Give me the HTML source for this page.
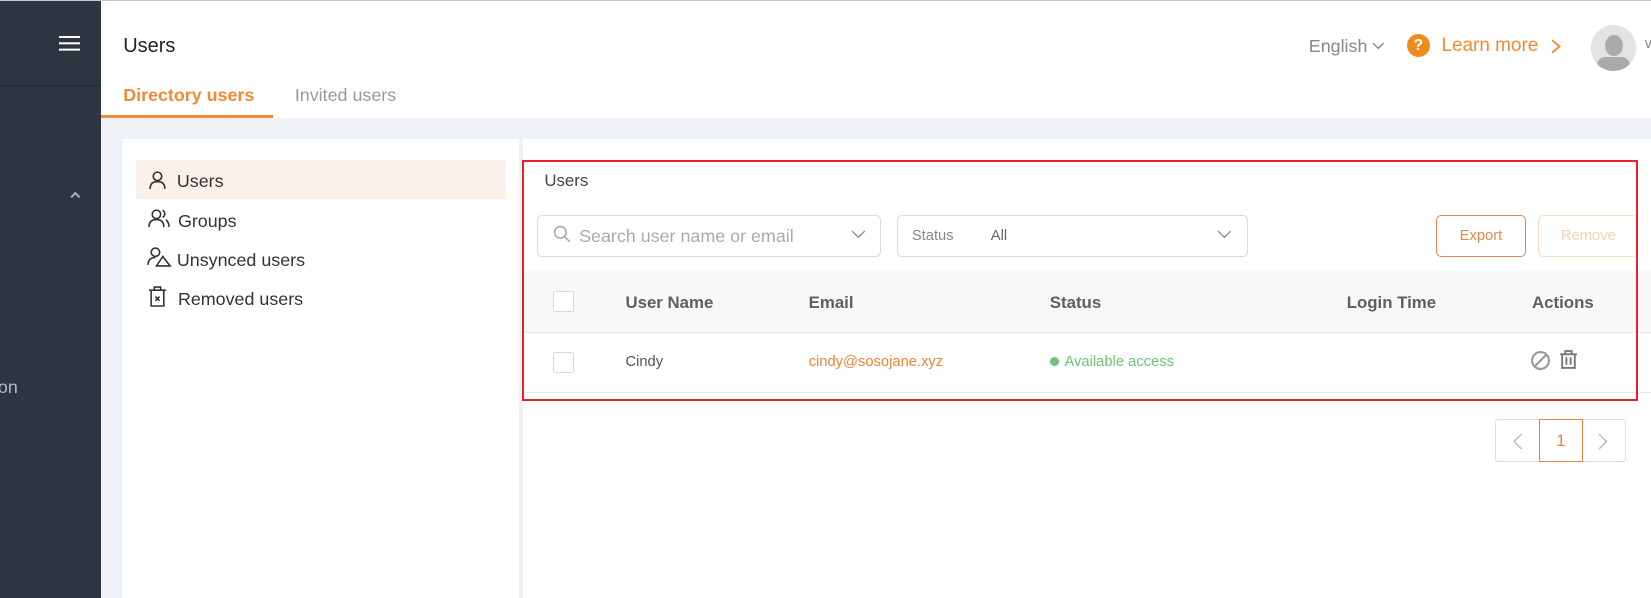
<!DOCTYPE html>
<html><head><meta charset="utf-8"><style>
*{box-sizing:border-box;margin:0;padding:0}
html,body{width:1651px;height:598px;overflow:hidden;background:#fff}
#w{width:1568px;height:568px;position:relative;zoom:1.05293;font-family:"Liberation Sans",sans-serif;overflow:hidden}
.a{position:absolute}
.t{white-space:nowrap}
</style></head><body><div id="w">
<div class="a" style="left:0;top:0;width:1568px;height:1px;background:#c8c8c8"></div>
<div class="a" style="left:0;top:1px;width:96px;height:567px;background:#2c3540"></div>
<div class="a" style="left:0;top:81px;width:96px;height:1px;background:#222a33"></div>
<div class="a" style="left:56px;top:34px;width:20px;height:2px;background:#fff;box-shadow:0 6px 0 #fff,0 12px 0 #fff"></div>
<svg class="a" style="left:66px;top:180px" width="12" height="10"><path d="M2 7 L6 3 L10 7" stroke="#aab" stroke-width="2" fill="none"/></svg>
<div class="a t" style="left:-2px;top:358px;font-size:17px;color:#b8bdc4">on</div>
<div class="a t" style="left:117px;top:33px;font-size:19px;color:#222">Users</div>
<div class="a t" style="left:117px;top:81px;font-size:17px;color:#f08a35;font-weight:bold">Directory users</div>
<div class="a t" style="left:280px;top:81px;font-size:17px;color:#999">Invited users</div>
<div class="a" style="left:96px;top:109px;width:163px;height:3px;background:#f08a35"></div>
<div class="a t" style="left:1243px;top:34px;font-size:17px;color:#888">English</div>
<svg class="a" style="left:1303px;top:39px" width="12" height="10"><path d="M1 2 L6 7 L11 2" stroke="#888" stroke-width="1.3" fill="none"/></svg>
<div class="a" style="left:1336px;top:32px;width:22px;height:22px;border-radius:50%;background:#f08a1c;color:#fff;font-size:15px;font-weight:bold;text-align:center;line-height:22px">?</div>
<div class="a t" style="left:1369px;top:33px;font-size:18px;color:#f08a35">Learn more</div>
<svg class="a" style="left:1472px;top:36px" width="12" height="16"><path d="M2 2 L9 8 L2 14" stroke="#f08a35" stroke-width="1.8" fill="none"/></svg>
<div class="a" style="left:1511px;top:24px;width:43px;height:43px;border-radius:50%;background:#e3e3e3;overflow:hidden">
<div class="a" style="left:13px;top:9px;width:17px;height:20px;border-radius:50%;background:#aaa"></div>
<div class="a" style="left:6px;top:30px;width:31px;height:18px;border-radius:8px 8px 0 0;background:#aaa"></div></div>
<div class="a t" style="left:1562px;top:34px;font-size:14px;color:#888">v</div>
<div class="a" style="left:96px;top:112px;width:1472px;height:456px;background:#eef1f5"></div>
<div class="a" style="left:116px;top:132px;width:377px;height:436px;background:#fff"></div>
<div class="a" style="left:497px;top:132px;width:1071px;height:436px;background:#fff"></div>
<div class="a" style="left:129px;top:152px;width:352px;height:37px;background:#fcf0ea"></div>
<svg class="a" style="left:141px;top:161px" width="20" height="20" fill="none" stroke="#333" stroke-width="1.5"><circle cx="9" cy="6" r="4"/><path d="M2 18 Q2 11 9 11 Q16 11 16 18"/></svg>
<div class="a t" style="left:168px;top:162px;font-size:17px;color:#333">Users</div>
<svg class="a" style="left:141px;top:198px" width="22" height="20" fill="none" stroke="#333" stroke-width="1.5"><circle cx="8" cy="6" r="4"/><path d="M1 18 Q1 11 8 11 Q15 11 15 18"/><path d="M14 2 Q18 6 14 9 M17 11 Q20 14 20 18"/></svg>
<div class="a t" style="left:169px;top:200px;font-size:17px;color:#333">Groups</div>
<svg class="a" style="left:140px;top:235px" width="24" height="20" fill="none" stroke="#333" stroke-width="1.5"><circle cx="8" cy="5" r="4"/><path d="M1 17 Q1 10 8 10"/><path d="M15 9 L22 18 L9 18 Z"/></svg>
<div class="a t" style="left:168px;top:237px;font-size:17px;color:#333">Unsynced users</div>
<svg class="a" style="left:141px;top:272px" width="18" height="20" fill="none" stroke="#333" stroke-width="1.5"><path d="M1 4 H17 M6 4 V1 H12 V4 M3 4 V19 H15 V4"/><path d="M7 10 L11 14 M11 10 L7 14"/></svg>
<div class="a t" style="left:169px;top:274px;font-size:17px;color:#333">Removed users</div>
<div class="a t" style="left:517px;top:162px;font-size:16px;color:#444">Users</div>
<div class="a" style="left:510px;top:204px;width:327px;height:40px;border:1px solid #d9d9d9;border-radius:5px"></div>
<svg class="a" style="left:525px;top:214px" width="18" height="18" fill="none" stroke="#aaa" stroke-width="1.5"><circle cx="7" cy="7" r="5.5"/><path d="M11 11 L16 16"/></svg>
<div class="a t" style="left:550px;top:215px;font-size:17px;color:#aaa">Search user name or email</div>
<svg class="a" style="left:808px;top:218px" width="14" height="10"><path d="M1 1 L7 7 L13 1" stroke="#888" stroke-width="1.2" fill="none"/></svg>
<div class="a" style="left:852px;top:204px;width:333px;height:40px;border:1px solid #d9d9d9;border-radius:5px"></div>
<div class="a t" style="left:866px;top:217px;font-size:14px;color:#888">Status</div>
<div class="a t" style="left:941px;top:217px;font-size:14px;color:#666">All</div>
<svg class="a" style="left:1156px;top:218px" width="14" height="10"><path d="M1 1 L7 7 L13 1" stroke="#888" stroke-width="1.2" fill="none"/></svg>
<div class="a t" style="left:1364px;top:204px;width:85px;height:40px;border:1px solid #e0894a;border-radius:5px;color:#e0894a;font-size:14px;text-align:center;line-height:38px">Export</div>
<div class="a t" style="left:1461px;top:204px;width:95px;height:40px;border:1px solid #f8dcc2;border-radius:5px;color:#f8d0ae;font-size:14px;text-align:center;line-height:38px">Remove</div>
<div class="a" style="left:497px;top:257px;width:1071px;height:59px;background:#f8f8f8;border-bottom:1px solid #e8e8e8"></div>
<div class="a" style="left:525px;top:276px;width:20px;height:20px;border:1px solid #d9d9d9;border-radius:2px;background:#fff"></div>
<div class="a t" style="left:594px;top:278px;font-size:16px;font-weight:bold;color:#5a6068">User Name</div>
<div class="a t" style="left:768px;top:278px;font-size:16px;font-weight:bold;color:#5a6068">Email</div>
<div class="a t" style="left:997px;top:278px;font-size:16px;font-weight:bold;color:#5a6068">Status</div>
<div class="a t" style="left:1279px;top:278px;font-size:16px;font-weight:bold;color:#5a6068">Login Time</div>
<div class="a t" style="left:1455px;top:278px;font-size:16px;font-weight:bold;color:#5a6068">Actions</div>
<div class="a" style="left:525px;top:334px;width:20px;height:20px;border:1px solid #d9d9d9;border-radius:2px"></div>
<div class="a t" style="left:594px;top:336px;font-size:14px;color:#555">Cindy</div>
<div class="a t" style="left:768px;top:336px;font-size:14px;color:#e8843a">cindy@sosojane.xyz</div>
<div class="a" style="left:997px;top:339px;width:9px;height:9px;border-radius:50%;background:#6cc47a"></div>
<div class="a t" style="left:1011px;top:336px;font-size:14px;color:#6cc47a">Available access</div>
<svg class="a" style="left:1453px;top:332px" width="20" height="20" fill="none" stroke="#999" stroke-width="2"><circle cx="10" cy="10" r="8"/><path d="M4.5 15.5 L15.5 4.5"/></svg>
<svg class="a" style="left:1481px;top:331px" width="18" height="20" fill="none" stroke="#777" stroke-width="1.8"><path d="M1 5 H17 M6 5 V2 H12 V5 M3 5 V18 H15 V5 M7 8 V15 M11 8 V15"/></svg>
<div class="a" style="left:497px;top:372px;width:1071px;height:1px;background:#e8e8e8"></div>
<div class="a" style="left:496px;top:152px;width:1060px;height:229px;border:2px solid #e8202a"></div>
<div class="a" style="left:1420px;top:398px;width:124px;height:41px;border:1px solid #ddd;border-radius:3px"></div>
<svg class="a" style="left:1435px;top:410px" width="12" height="18"><path d="M10 2 L3 9 L10 16" stroke="#bbb" stroke-width="1.4" fill="none"/></svg>
<div class="a" style="left:1462px;top:398px;width:41px;height:41px;border:1px solid #e8843a;color:#e8843a;font-size:16px;text-align:center;line-height:39px">1</div>
<svg class="a" style="left:1517px;top:410px" width="12" height="18"><path d="M2 2 L9 9 L2 16" stroke="#bbb" stroke-width="1.4" fill="none"/></svg>
</div></body></html>
